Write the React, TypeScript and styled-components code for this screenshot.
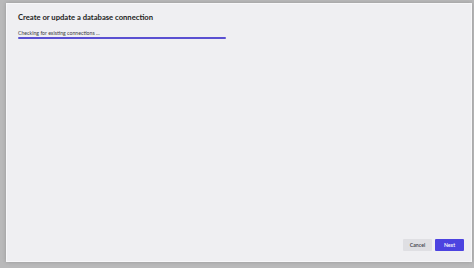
import styled, { createGlobalStyle } from 'styled-components'

const GlobalStyle = createGlobalStyle`
  html, body {
    margin: 0;
    height: 100%;
    background: #b9b9ba;
  }
  #root {
    height: 100%;
  }
`

export default function App() {
  return (
    <>
      <GlobalStyle />
      <Backdrop>
        <Dialog>
          <Title>Create or update a database connection</Title>
          <Progress>
            <ProgressLabel>Checking for existing connections ...</ProgressLabel>
            <ProgressTrack />
          </Progress>
          <Spacer />
          <Footer>
            <Button>Cancel</Button>
            <Button $primary>Next</Button>
          </Footer>
        </Dialog>
      </Backdrop>
    </>
  )
}

const Backdrop = styled.div`
  box-sizing: border-box;
  height: 268px;
  padding: 3px 2px 6px 6px;
  display: flex;
`

const Dialog = styled.div`
  flex: 1;
  display: flex;
  flex-direction: column;
  background: #efeff2;
  border: 1px solid #f7f7f9;
  box-shadow: 0 0 4px rgba(0, 0, 0, 0.18);
  padding: 7px 7px 10px 11px;
  font-family: Lato, 'Open Sans', sans-serif;
  color: #1d1d22;
`

const Title = styled.h2`
  margin: 0;
  font-size: 7.65px;
  font-weight: 700;
  line-height: 12px;
`

const Progress = styled.div`
  width: 208px;
  margin-top: 7px;
`

const ProgressLabel = styled.div`
  font-size: 5.2px;
  line-height: 7px;
  color: #3a3a44;
`

const ProgressTrack = styled.div`
  height: 2px;
  background: #5a50d2;
  border-radius: 1px;
`

const Spacer = styled.div`
  flex: 1;
`

const Footer = styled.div`
  display: flex;
  justify-content: flex-end;
  gap: 3px;
`

const Button = styled.button<{ $primary?: boolean }>`
  width: 29px;
  height: 12px;
  padding: 0;
  border: none;
  border-radius: 1px;
  font-family: Lato, 'Open Sans', sans-serif;
  font-size: 5.2px;
  font-weight: 600;
  background: ${(p) => (p.$primary ? '#4c43e0' : '#dfdfe3')};
  color: ${(p) => (p.$primary ? '#ffffff' : '#3a3a44')};
`
